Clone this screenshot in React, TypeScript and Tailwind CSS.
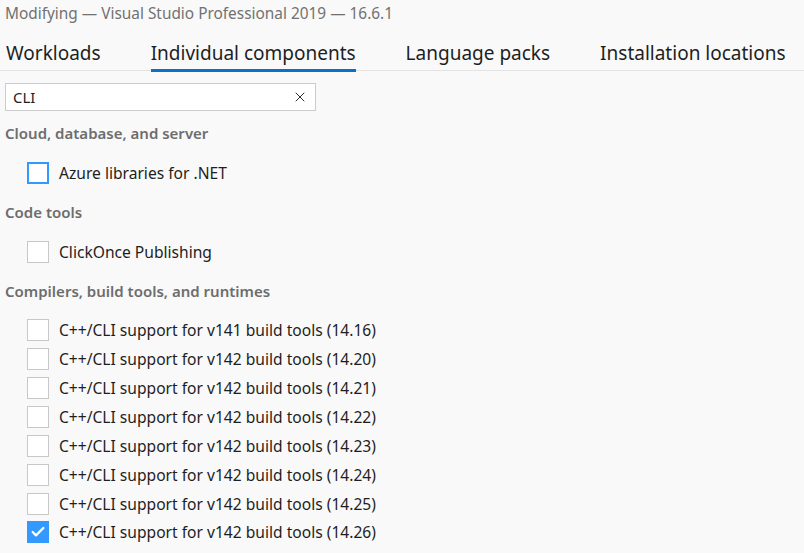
import { X, Check } from 'lucide-react'

const tabs = ['Workloads', 'Individual components', 'Language packs', 'Installation locations']

const sections = [
  { title: 'Cloud, database, and server', items: [{ label: 'Azure libraries for .NET', state: 'focus' }] },
  { title: 'Code tools', items: [{ label: 'ClickOnce Publishing', state: 'off' }] },
  {
    title: 'Compilers, build tools, and runtimes',
    items: [
      { label: 'C++/CLI support for v141 build tools (14.16)', state: 'off' },
      { label: 'C++/CLI support for v142 build tools (14.20)', state: 'off' },
      { label: 'C++/CLI support for v142 build tools (14.21)', state: 'off' },
      { label: 'C++/CLI support for v142 build tools (14.22)', state: 'off' },
      { label: 'C++/CLI support for v142 build tools (14.23)', state: 'off' },
      { label: 'C++/CLI support for v142 build tools (14.24)', state: 'off' },
      { label: 'C++/CLI support for v142 build tools (14.25)', state: 'off' },
      { label: 'C++/CLI support for v142 build tools (14.26)', state: 'on' },
    ],
  },
]

function Box({ state }: { state: string }) {
  if (state === 'on') {
    return (
      <span className="w-[22px] h-[22px] shrink-0 bg-[#3399ff] flex items-center justify-center">
        <Check size={16} strokeWidth={3.5} className="text-white" />
      </span>
    )
  }
  return (
    <span
      className={`w-[22px] h-[22px] shrink-0 bg-white ${
        state === 'focus' ? 'border-2 border-[#3399ff]' : 'border border-[#c8c8c8]'
      }`}
    />
  )
}

export default function App() {
  return (
    <div className="w-[804px] h-[553px] overflow-hidden bg-[#f9f9f9] font-['Noto_Sans',sans-serif] text-[#1e1e1e]">
      {/* window title */}
      <div className="pl-[5px] pt-[3px] h-[29px] text-[15.4px] text-[#717171] leading-[22px] whitespace-nowrap">
        Modifying — Visual Studio Professional 2019 — 16.6.1
      </div>

      {/* tabs */}
      <div className="flex gap-[50px] pl-[6px] border-b border-[#e3e3e3] h-[42px] items-end">
        {tabs.map((t, i) => (
          <div
            key={t}
            className={`text-[19px] leading-[26px] pb-[3px] border-b-[3px] mb-[-2px] whitespace-nowrap ${
              i === 1 ? 'border-[#0a70c8]' : 'border-transparent'
            }`}
          >
            {t}
          </div>
        ))}
      </div>

      {/* search */}
      <div className="pl-[5px] pt-[12px]">
        <div className="w-[311px] h-[28px] bg-white border border-[#cccccc] flex items-center justify-between pl-[7px] pr-[7px]">
          <span className="text-[15px]">CLI</span>
          <X size={16} strokeWidth={1.4} className="text-[#1e1e1e]" />
        </div>
      </div>

      {/* sections */}
      <div className="pl-[5px] pt-[10px]">
        {sections.map((s) => (
          <div key={s.title}>
            <div className="h-[25px] text-[15px] font-semibold text-[#6d6d6d] leading-[25px] whitespace-nowrap">{s.title}</div>
            <div className={s.items.length > 1 ? 'pt-[12px]' : 'pt-[12.5px] pb-[12.5px]'}>
              {s.items.map((it) => (
                <div key={it.label} className="flex items-center h-[28.9px] pl-[22px] gap-[10px]">
                  <Box state={it.state} />
                  <span className="text-[15.6px] leading-[20px] whitespace-nowrap">{it.label}</span>
                </div>
              ))}
            </div>
          </div>
        ))}
      </div>
    </div>
  )
}
